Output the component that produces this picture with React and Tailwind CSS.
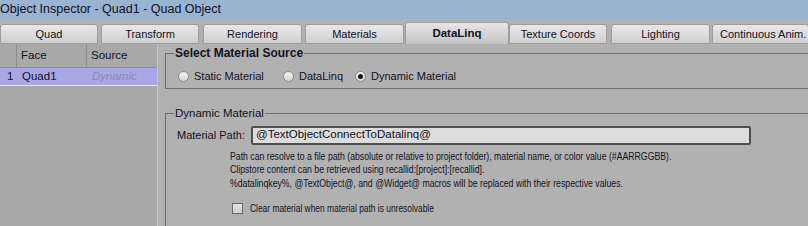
import React from "react";

const tabs = [
  { label: "Quad", w: "w-[98px]", ml: "ml-0" },
  { label: "Transform", w: "w-[98px]", ml: "ml-[3px]" },
  { label: "Rendering", w: "w-[99px]", ml: "ml-[4px]" },
  { label: "Materials", w: "w-[99px]", ml: "ml-[3px]" },
  { label: "DataLinq", w: "w-[104px]", ml: "ml-[1px]", active: true },
  { label: "Texture Coords", w: "w-[98px]", ml: "ml-[0px]" },
  { label: "Lighting", w: "w-[99px]", ml: "ml-[4px]" },
  { label: "Continuous Anim.", w: "w-[97px]", ml: "ml-[2px]", left: true },
];

function Radio({ label, checked, w }) {
  return (
    <label className={`flex shrink-0 items-center gap-[5px] ${w}`}>
      <span className="flex h-[11px] w-[11px] items-center justify-center rounded-full border border-[#8a8a8a] bg-gradient-to-b from-[#f4f4f4] to-[#d8d8d8]">
        {checked && <span className="h-[5px] w-[5px] rounded-full bg-[#141414]" />}
      </span>
      <span>{label}</span>
    </label>
  );
}

function App() {
  return (
    <div
      className="h-[226px] w-[808px] overflow-hidden bg-[#b1b1b1] text-[11px] text-[#111122]"
      style={{ fontFamily: "'Liberation Sans', Arial, sans-serif" }}
    >
      {/* title */}
      <div className="flex h-[19px] items-center whitespace-nowrap bg-[#98b4d1] text-[12.5px] leading-none">
        Object Inspector - Quad1 - Quad Object
      </div>

      {/* tabs */}
      <div className="flex h-[25px] items-end">
        {tabs.map((t) =>
          t.active ? (
            <div
              key={t.label}
              className={`${t.w} ${t.ml} flex h-[22px] shrink-0 items-center justify-center rounded-t-[3px] border border-b-0 border-[#9c9c9c] bg-gradient-to-b from-[#e6e6e6] to-[#c4c4c4] text-[11.5px] font-bold`}
            >
              {t.label}
            </div>
          ) : (
            <div
              key={t.label}
              className={`${t.w} ${t.ml} flex h-[20px] shrink-0 items-center overflow-hidden whitespace-nowrap rounded-t-[3px] border border-[#9c9c9c] bg-gradient-to-b from-[#e8e8e8] to-[#d0d0d0] ${t.left ? "justify-start pl-[7px]" : "justify-center"}`}
            >
              {t.label}
            </div>
          )
        )}
      </div>

      <div className="flex h-[182px]">
        {/* left list */}
        <div className="w-[158px] shrink-0 border-r border-[#c4c4c4] bg-[#a9a9a9] text-[11.5px]">
          <div className="flex h-[24px] items-center border-b border-[#8e8e8e]">
            <div className="h-full w-[17px] border-r border-[#8e8e8e]" />
            <div className="flex h-full w-[70px] items-center border-r border-[#8e8e8e] pl-[4px]">Face</div>
            <div className="pl-[4px]">Source</div>
          </div>
          <div className="flex h-[18px] items-center border-b border-[#e6e6f4] bg-[#a8a8e6]">
            <div className="w-[17px] pl-[7px]">1</div>
            <div className="w-[70px] pl-[5px]">Quad1</div>
            <div className="pl-[5px] italic text-[#8a8aa8]">Dynamic</div>
          </div>
        </div>

        {/* right */}
        <div className="flex-1 pl-[7px]">
          <fieldset className="mt-[3px] h-[42px] border border-r-0 border-[#6e6e6e] pl-[8px]">
            <legend className="px-[1px] text-[12px] font-bold leading-none">Select Material Source</legend>
            <div className="mt-[9px] flex items-center pl-[4px]">
              <Radio label="Static Material" w="w-[105px]" />
              <Radio label="DataLinq" w="w-[72px]" />
              <Radio label="Dynamic Material" checked />
            </div>
          </fieldset>

          <fieldset className="mt-[19px] h-[120px] border border-r-0 border-b-0 border-[#6e6e6e] pl-[8px]">
            <legend className="px-[1px] text-[11.5px] leading-none">Dynamic Material</legend>
            <div className="mt-[6px] flex items-center whitespace-nowrap">
              <span className="w-[77px] pl-[3px]">Material Path:</span>
              <div className="flex h-[19px] w-[500px] items-center rounded-[2px] border-2 border-[#4e4e4e] bg-[#dcdcdc] pl-[3px] text-[11.5px]">
                @TextObjectConnectToDatalinq@
              </div>
            </div>
            <div className="mt-[5px] ml-[56px] w-[600px] origin-left scale-x-[0.758] whitespace-nowrap text-[11.5px] leading-[13.5px]">
              <div>Path can resolve to a file path (absolute or relative to project folder), material name, or color value (#AARRGGBB).</div>
              <div>Clipstore content can be retrieved using recallid:[project]:[recallid].</div>
              <div>%datalinqkey%, @TextObject@, and @Widget@ macros will be replaced with their respective values.</div>
            </div>
            <label className="mt-[10px] ml-[58px] flex items-center gap-[7px]">
              <span className="h-[11px] w-[11px] shrink-0 border border-[#6a6a6a] bg-gradient-to-b from-[#e4e4e4] to-[#cfcfcf]" />
              <span className="origin-left scale-x-[0.73] whitespace-nowrap text-[11.5px]">
                Clear material when material path is unresolvable
              </span>
            </label>
          </fieldset>
        </div>
      </div>
    </div>
  );
}

export default App;
